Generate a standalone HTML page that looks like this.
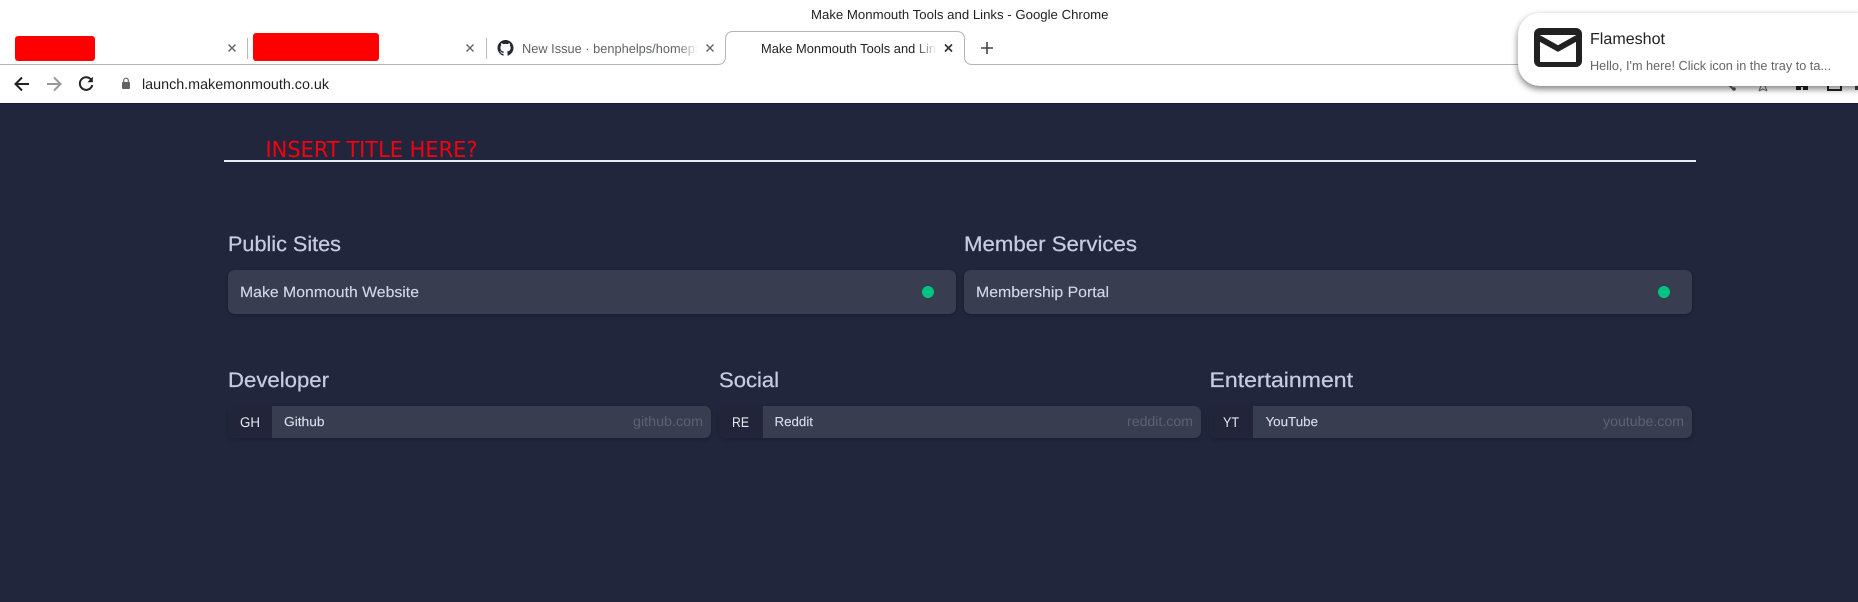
<!DOCTYPE html>
<html lang="en">
<head>
<meta charset="utf-8">
<title>Make Monmouth Tools and Links - Google Chrome</title>
<style>
html,body{margin:0;padding:0;width:1858px;height:602px;overflow:hidden;background:#212640}
.a{position:absolute}
#chrome{left:0;top:0;width:1858px;height:103px;background:#fff}
#page{left:0;top:103px;width:1858px;height:499px;background:#21263c;border-top:1px solid #1b1b35;box-sizing:border-box}
.card{background:#393d50;border-radius:7px;box-shadow:0 2px 4px rgba(0,0,0,.18)}
.badge{background:#222439;border-radius:7px 0 0 7px}
#rule{left:224px;top:160px;width:1472px;height:2px;background:#e8ebf5}
#note{left:1518px;top:13px;width:360px;height:73px;background:#fff;border-radius:22px;box-shadow:0 3px 7px rgba(0,0,0,.5)}
svg{position:absolute;left:0;top:0}
text{font-family:"Liberation Sans",sans-serif;white-space:pre;text-rendering:geometricPrecision}
.h{font-size:21px;fill:#c6cbe0;stroke:#c6cbe0;stroke-width:.25px}
.c{font-size:15px;fill:#d3d6e4;stroke:#d3d6e4;stroke-width:.15px}
.s{font-size:13px;fill:#d8dbe8;stroke:#d8dbe8;stroke-width:.15px}
.b{font-size:14px;fill:#e6e8f2}
.u{font-size:14px;fill:#5d6174}
.t{font-size:13px}
</style>
</head>
<body>
<div class="a" id="chrome"></div>
<div class="a" id="page"></div>

<div class="a" style="left:15px;top:36px;width:80px;height:25px;background:#f00;border-radius:3px"></div>
<div class="a" style="left:253px;top:33px;width:126px;height:28px;background:#f00;border-radius:3px"></div>

<div class="a" id="rule"></div>

<div class="a card" style="left:228px;top:270px;width:728px;height:44px"></div>
<div class="a card" style="left:964px;top:270px;width:728px;height:44px"></div>
<div class="a" style="left:922px;top:286px;width:12px;height:12px;border-radius:50%;background:#00c480"></div>
<div class="a" style="left:1658px;top:286px;width:12px;height:12px;border-radius:50%;background:#00c480"></div>

<div class="a card" style="left:228px;top:406px;width:483px;height:32px"></div>
<div class="a badge" style="left:228px;top:406px;width:44px;height:32px"></div>
<div class="a card" style="left:719px;top:406px;width:482px;height:32px"></div>
<div class="a badge" style="left:719px;top:406px;width:44px;height:32px"></div>
<div class="a card" style="left:1209px;top:406px;width:483px;height:32px"></div>
<div class="a badge" style="left:1209px;top:406px;width:44px;height:32px"></div>

<svg width="1858" height="602" viewBox="0 0 1858 602" xmlns="http://www.w3.org/2000/svg">
  <defs>
    <linearGradient id="fade" x1="0" x2="1" y1="0" y2="0">
      <stop offset="0" stop-color="#fff" stop-opacity="0"/>
      <stop offset="1" stop-color="#fff" stop-opacity="1"/>
    </linearGradient>
  </defs>

  <!-- tab strip -->
  <path d="M0 64.500H717.500q8 0 8-8V39.500q0-8 8-8H956.500q8 0 8 8V56.500q0 8 8 8H1520" fill="#fff" stroke="#b5b5b5" stroke-width="1"/>
  <rect x="247" y="38" width="1" height="21" fill="#b9b9b9"/>
  <rect x="486" y="38" width="1" height="21" fill="#b9b9b9"/>

  <text class="t" x="811" y="19" textLength="297.5" lengthAdjust="spacingAndGlyphs" fill="#222">Make Monmouth Tools and Links - Google Chrome</text>

  <g stroke="#5f6368" stroke-width="1.400" fill="none">
    <path d="M228.500 44.500l7 7M235.500 44.500l-7 7"/>
    <path d="M466.500 44.500l7 7M473.500 44.500l-7 7"/>
    <path d="M706.500 44.500l7 7M713.500 44.500l-7 7"/>
  </g>
  <path d="M945 44.500l7 7M952 44.500l-7 7" stroke="#333" stroke-width="1.700" fill="none"/>
  <path d="M987 42v12M981 48h12" stroke="#444" stroke-width="1.600" fill="none"/>

  <g transform="translate(497.5,40)"><path fill="#24292e" d="M8 0C3.58 0 0 3.58 0 8c0 3.54 2.29 6.53 5.47 7.59.4.07.55-.17.55-.38 0-.19-.01-.82-.01-1.49-2.01.37-2.53-.49-2.69-.94-.09-.23-.48-.94-.82-1.13-.28-.15-.68-.52-.01-.53.63-.01 1.08.58 1.23.82.72 1.21 1.87.87 2.33.66.07-.52.28-.87.51-1.07-1.78-.2-3.64-.89-3.64-3.95 0-.87.31-1.59.82-2.15-.08-.2-.36-1.02.08-2.12 0 0 .67-.21 2.2.82.64-.18 1.32-.27 2-.27.68 0 1.36.09 2 .27 1.53-1.04 2.2-.82 2.2-.82.44 1.1.16 1.92.08 2.12.51.56.82 1.27.82 2.15 0 3.07-1.87 3.75-3.65 3.95.29.25.54.73.54 1.48 0 1.07-.01 1.93-.01 2.2 0 .21.15.46.55.38A8.013 8.013 0 0016 8c0-4.42-3.58-8-8-8z"/></g>
  <text class="t" x="522" y="53" textLength="180" lengthAdjust="spacingAndGlyphs" fill="#5f6368">New Issue · benphelps/homepa</text>
  <rect x="678" y="38" width="20" height="20" fill="url(#fade)"/>
  <rect x="698" y="38" width="6" height="20" fill="#fff"/>
  <text class="t" x="761" y="53" textLength="175" lengthAdjust="spacingAndGlyphs" fill="#222">Make Monmouth Tools and Lin</text>
  <rect x="914" y="38" width="23" height="20" fill="url(#fade)"/>

  <!-- toolbar -->
  <path d="M29 84H16M22 77.500L15.500 84l6.500 6.500" stroke="#222" stroke-width="2" fill="none"/>
  <path d="M47 84H60M54 77.500L60.500 84 54 90.500" stroke="#999" stroke-width="2" fill="none"/>
  <path d="M91 79.500A6.300 6.300 0 1 0 92.300 85" stroke="#222" stroke-width="2" fill="none"/>
  <path d="M92.800 76.800V82.200H87.400z" fill="#222"/>
  <rect x="122" y="82" width="8" height="7" rx="1" fill="#5f6368"/>
  <path d="M123.700 82.500V80.500a2.300 2.300 0 0 1 4.600 0V82.500" stroke="#5f6368" stroke-width="1.200" fill="none"/>
  <text x="142" y="89" font-size="14.500" textLength="187" lengthAdjust="spacingAndGlyphs" fill="#222">launch.makemonmouth.co.uk</text>

  <!-- icons peeking under notification -->
  <path d="M1728 84l5 5" stroke="#555" stroke-width="1.800" fill="none"/>
  <circle cx="1734" cy="89" r="1.800" fill="#555"/>
  <path d="M1759 91l2-5M1767 91l-2-5M1759 91l4-2 4 2" stroke="#777" stroke-width="1.200" fill="none"/>
  <rect x="1796" y="84" width="12" height="6" fill="#222"/>
  <rect x="1801" y="87" width="2" height="4" fill="#fff"/>
  <path d="M1828 84v6h13V84" stroke="#222" stroke-width="2" fill="none"/>
  <rect x="1855" y="84" width="3" height="6" fill="#444"/>
</svg>

<div class="a" id="note"></div>

<svg width="1858" height="602" viewBox="0 0 1858 602" xmlns="http://www.w3.org/2000/svg">
  <!-- notification -->
  <rect x="1534" y="28" width="48" height="39" rx="6" fill="#212121"/>
  <rect x="1540" y="35" width="36" height="27" fill="#fff"/>
  <path d="M1536 36.300L1558 48.500 1580 36.300" stroke="#212121" stroke-width="5.800" fill="none"/>
  <text x="1590" y="44" font-size="16" textLength="75" lengthAdjust="spacingAndGlyphs" fill="#222">Flameshot</text>
  <text x="1590" y="70" font-size="13" textLength="241" lengthAdjust="spacingAndGlyphs" fill="#666">Hello, I'm here! Click icon in the tray to ta...</text>

  <!-- page text -->
  <text x="265.500" y="157" textLength="212" lengthAdjust="spacingAndGlyphs" style="font-family:'DejaVu Sans',sans-serif;font-size:22px" fill="#f50010">INSERT TITLE HERE?</text>

  <text class="h" x="228" y="251" textLength="113" lengthAdjust="spacingAndGlyphs">Public Sites</text>
  <text class="h" x="964" y="251" textLength="173" lengthAdjust="spacingAndGlyphs">Member Services</text>
  <text class="c" x="240" y="297" textLength="179" lengthAdjust="spacingAndGlyphs">Make Monmouth Website</text>
  <text class="c" x="976" y="297" textLength="133" lengthAdjust="spacingAndGlyphs">Membership Portal</text>

  <text class="h" x="228" y="387" textLength="101" lengthAdjust="spacingAndGlyphs">Developer</text>
  <text class="h" x="719" y="387" textLength="60" lengthAdjust="spacingAndGlyphs">Social</text>
  <text class="h" x="1209.500" y="387" textLength="143.500" lengthAdjust="spacingAndGlyphs">Entertainment</text>

  <text class="b" x="240" y="427" textLength="20" lengthAdjust="spacingAndGlyphs">GH</text>
  <text class="s" x="284" y="426" textLength="40.500" lengthAdjust="spacingAndGlyphs">Github</text>
  <text class="u" x="633" y="426" textLength="70" lengthAdjust="spacingAndGlyphs">github.com</text>

  <text class="b" x="732" y="427" textLength="17" lengthAdjust="spacingAndGlyphs">RE</text>
  <text class="s" x="774.500" y="426" textLength="38.500" lengthAdjust="spacingAndGlyphs">Reddit</text>
  <text class="u" x="1127" y="426" textLength="66" lengthAdjust="spacingAndGlyphs">reddit.com</text>

  <text class="b" x="1223" y="427" textLength="16" lengthAdjust="spacingAndGlyphs">YT</text>
  <text class="s" x="1265.500" y="426" textLength="52.500" lengthAdjust="spacingAndGlyphs">YouTube</text>
  <text class="u" x="1603" y="426" textLength="81" lengthAdjust="spacingAndGlyphs">youtube.com</text>
</svg>
</body>
</html>
